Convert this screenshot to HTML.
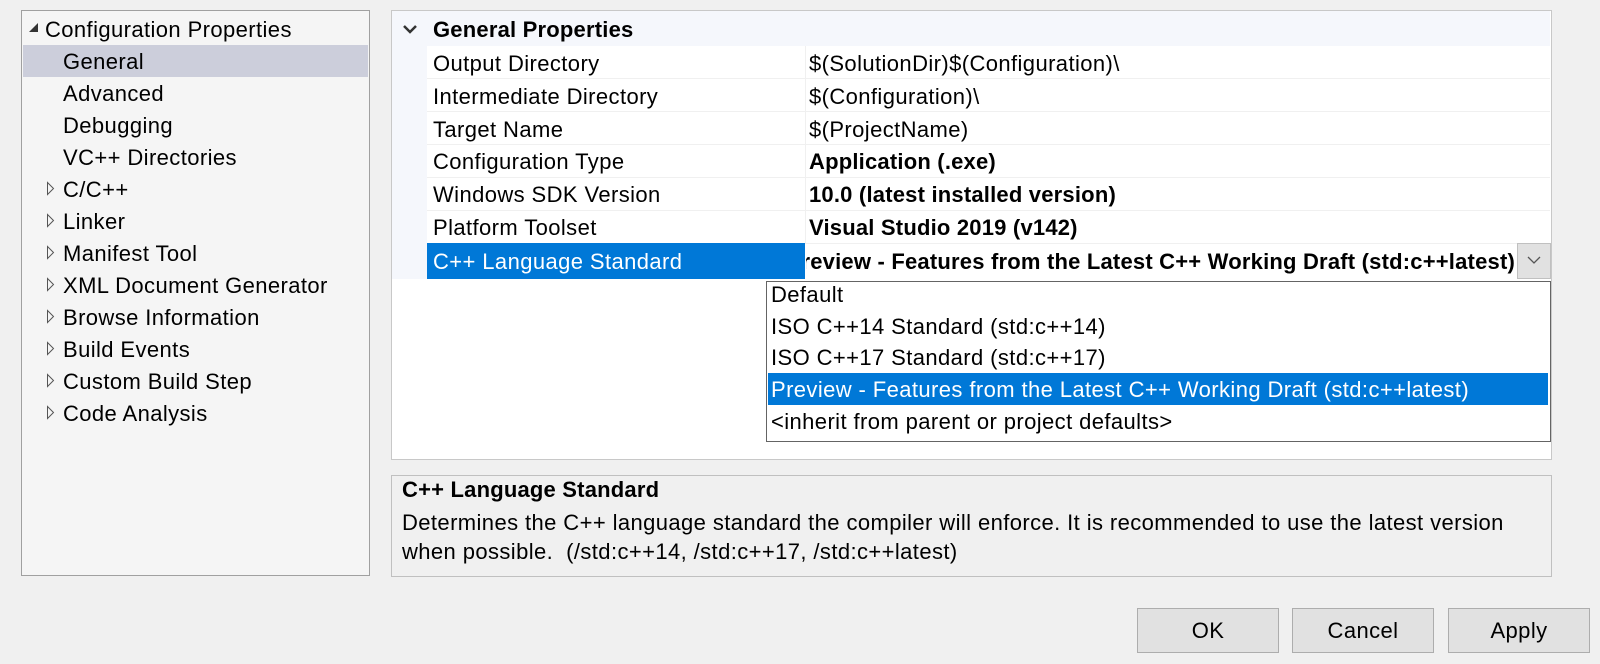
<!DOCTYPE html>
<html><head><meta charset="utf-8"><style>
body{margin:0;width:1600px;height:664px;background:#f0f0f0;font-family:"Liberation Sans",sans-serif;font-size:22px;letter-spacing:0.4px;color:#000;position:relative;overflow:hidden}
.a{position:absolute;white-space:nowrap}
.t{line-height:32px;height:32px}
.b{font-weight:bold;letter-spacing:0.2px}
</style></head><body>
<!-- left tree -->
<div class="a" style="left:21px;top:10px;width:347px;height:564px;background:#f5f5f5;border:1px solid #a0a0a0"></div>
<div class="a" style="left:23px;top:45px;width:345px;height:32px;background:#cccedb"></div>
<div class="a" style="left:29px;top:23px;width:0;height:0;border-left:9px solid transparent;border-bottom:9px solid #333"></div>
<div class="a t" style="left:45px;top:14px">Configuration Properties</div>
<div class="a t" style="left:63px;top:46px">General</div>
<div class="a t" style="left:63px;top:78px">Advanced</div>
<div class="a t" style="left:63px;top:110px">Debugging</div>
<div class="a t" style="left:63px;top:142px">VC++ Directories</div>
<svg class="a" style="left:46px;top:180px" width="12" height="260">
<g fill="none" stroke="#555" stroke-width="1">
<path d="M1.5 2.5 L7.5 8.5 L1.5 14.5Z"/><path transform="translate(0,32)" d="M1.5 2.5 L7.5 8.5 L1.5 14.5Z"/><path transform="translate(0,64)" d="M1.5 2.5 L7.5 8.5 L1.5 14.5Z"/><path transform="translate(0,96)" d="M1.5 2.5 L7.5 8.5 L1.5 14.5Z"/><path transform="translate(0,128)" d="M1.5 2.5 L7.5 8.5 L1.5 14.5Z"/><path transform="translate(0,160)" d="M1.5 2.5 L7.5 8.5 L1.5 14.5Z"/><path transform="translate(0,192)" d="M1.5 2.5 L7.5 8.5 L1.5 14.5Z"/><path transform="translate(0,224)" d="M1.5 2.5 L7.5 8.5 L1.5 14.5Z"/></g></svg>
<div class="a t" style="left:63px;top:174px">C/C++</div>
<div class="a t" style="left:63px;top:206px">Linker</div>
<div class="a t" style="left:63px;top:238px">Manifest Tool</div>
<div class="a t" style="left:63px;top:270px">XML Document Generator</div>
<div class="a t" style="left:63px;top:302px">Browse Information</div>
<div class="a t" style="left:63px;top:334px">Build Events</div>
<div class="a t" style="left:63px;top:366px">Custom Build Step</div>
<div class="a t" style="left:63px;top:398px">Code Analysis</div>

<!-- property grid -->
<div class="a" style="left:391px;top:10px;width:1159px;height:448px;background:#fff;border:1px solid #c8c8c8"></div>
<div class="a" style="left:392px;top:11px;width:1158px;height:35px;background:#f5f7fc"></div>
<div class="a" style="left:392px;top:46px;width:35px;height:233px;background:#f5f7fc"></div>
<svg class="a" style="left:402px;top:24px" width="16" height="12"><path d="M2 2 L8 8 L14 2" fill="none" stroke="#333" stroke-width="2.5"/></svg>
<div class="a t b" style="left:433px;top:14px">General Properties</div>
<div class="a" style="left:805px;top:46px;width:1px;height:198px;background:#f0f0f0"></div>
<div class="a" style="left:427px;top:78px;width:1123px;height:1px;background:#f0f0f0"></div>
<div class="a" style="left:427px;top:111px;width:1123px;height:1px;background:#f0f0f0"></div>
<div class="a" style="left:427px;top:144px;width:1123px;height:1px;background:#f0f0f0"></div>
<div class="a" style="left:427px;top:177px;width:1123px;height:1px;background:#f0f0f0"></div>
<div class="a" style="left:427px;top:210px;width:1123px;height:1px;background:#f0f0f0"></div>
<div class="a" style="left:427px;top:243px;width:1123px;height:1px;background:#f0f0f0"></div>
<div class="a t" style="left:433px;top:48px">Output Directory</div><div class="a t" style="left:809px;top:48px">$(SolutionDir)$(Configuration)\</div>
<div class="a t" style="left:433px;top:81px">Intermediate Directory</div><div class="a t" style="left:809px;top:81px">$(Configuration)\</div>
<div class="a t" style="left:433px;top:114px">Target Name</div><div class="a t" style="left:809px;top:114px">$(ProjectName)</div>
<div class="a t" style="left:433px;top:146px">Configuration Type</div><div class="a t b" style="left:809px;top:146px">Application (.exe)</div>
<div class="a t" style="left:433px;top:179px">Windows SDK Version</div><div class="a t b" style="left:809px;top:179px">10.0 (latest installed version)</div>
<div class="a t" style="left:433px;top:212px">Platform Toolset</div><div class="a t b" style="left:809px;top:212px">Visual Studio 2019 (v142)</div>
<div class="a" style="left:427px;top:243px;width:378px;height:36px;background:#0078d7"></div>
<div class="a t" style="left:433px;top:246px;color:#fff">C++ Language Standard</div>
<div class="a" style="left:806px;top:243px;width:711px;height:36px;overflow:hidden"><div class="a t b" style="right:2px;top:3px">Preview - Features from the Latest C++ Working Draft (std:c++latest)</div></div>
<div class="a" style="left:1517px;top:243px;width:32px;height:34px;background:#e1e1e1;border:1px solid #c0c0c0"></div>
<svg class="a" style="left:1527px;top:255px" width="14" height="10"><path d="M1 2 L7 8 L13 2" fill="none" stroke="#555" stroke-width="1.3"/></svg>
<!-- dropdown -->
<div class="a" style="left:766px;top:281px;width:783px;height:159px;background:#fff;border:1px solid #646464"></div>
<div class="a" style="left:768px;top:373px;width:780px;height:32px;background:#0078d7"></div>
<div class="a t" style="left:771px;top:279px">Default</div>
<div class="a t" style="left:771px;top:311px">ISO C++14 Standard (std:c++14)</div>
<div class="a t" style="left:771px;top:342px">ISO C++17 Standard (std:c++17)</div>
<div class="a t" style="left:771px;top:374px;color:#fff">Preview - Features from the Latest C++ Working Draft (std:c++latest)</div>
<div class="a t" style="left:771px;top:406px">&lt;inherit from parent or project defaults&gt;</div>
<!-- description -->
<div class="a" style="left:391px;top:475px;width:1159px;height:100px;border:1px solid #c0c0c0"></div>
<div class="a t b" style="left:402px;top:474px">C++ Language Standard</div>
<div class="a t" style="left:402px;top:507px">Determines the C++ language standard the compiler will enforce. It is recommended to use the latest version</div>
<div class="a t" style="left:402px;top:536px">when possible.&nbsp; (/std:c++14, /std:c++17, /std:c++latest)</div>
<!-- buttons -->
<div class="a" style="left:1137px;top:608px;width:140px;height:43px;background:#e1e1e1;border:1px solid #adadad;text-align:center;line-height:43px">OK</div>
<div class="a" style="left:1292px;top:608px;width:140px;height:43px;background:#e1e1e1;border:1px solid #adadad;text-align:center;line-height:43px">Cancel</div>
<div class="a" style="left:1448px;top:608px;width:140px;height:43px;background:#e1e1e1;border:1px solid #adadad;text-align:center;line-height:43px">Apply</div>
</body></html>
